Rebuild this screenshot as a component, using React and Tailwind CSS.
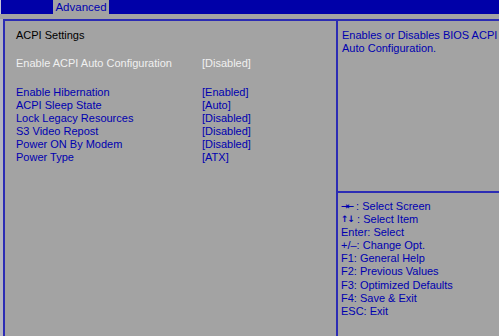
import React from 'react'

const BLUE_BAR = 'bg-[#0000a8]'

const items = [
  ['Enable Hibernation', '[Enabled]'],
  ['ACPI Sleep State', '[Auto]'],
  ['Lock Legacy Resources', '[Disabled]'],
  ['S3 Video Repost', '[Disabled]'],
  ['Power ON By Modem', '[Disabled]'],
  ['Power Type', '[ATX]'],
]

const help = [
  'Enter: Select',
  '+/\u2013: Change Opt.',
  'F1: General Help',
  'F2: Previous Values',
  'F3: Optimized Defaults',
  'F4: Save & Exit',
  'ESC: Exit',
]

const arrowFont = { fontFamily: '"DejaVu Sans", sans-serif' }

export default function App() {
  return (
    <div
      className="w-[499px] h-[336px] overflow-hidden bg-[#a3a3a3] text-[11px] leading-[13px] flex flex-col"
      style={{ fontFamily: '"Liberation Sans", Arial, sans-serif' }}
    >
      {/* top menu bar */}
      <div className={`h-[14px] ${BLUE_BAR} flex shrink-0 border-l border-[#c4c4d8]`}>
        <div className="ml-[52px] w-[56px] bg-[#a3a3a3] text-[#0000b0] text-[11.5px] leading-[14px] text-center">
          Advanced
        </div>
      </div>

      {/* frame */}
      <div className="flex flex-1 mt-[5px] border-l-[3px] border-[#b4b4c0]">
        <div className="flex flex-1 border-t-2 border-l-2 border-[#2c2cb4]">
          {/* left panel */}
          <div className="w-[333px] border-r-2 border-[#2c2cb4] pl-[11px] pt-[8px]">
            <div className="text-black">ACPI Settings</div>
            <div className="flex mt-[15px] text-[#f0f0f0]">
              <span className="w-[186px]">Enable ACPI Auto Configuration</span>
              <span>[Disabled]</span>
            </div>
            <div className="mt-[16px] text-[#0000b0]">
              {items.map(([label, value]) => (
                <div key={label} className="flex">
                  <span className="w-[186px]">{label}</span>
                  <span>{value}</span>
                </div>
              ))}
            </div>
          </div>

          {/* right panel */}
          <div className="flex-1 flex flex-col text-[#0000b0]">
            <div className="h-[172px] shrink-0 border-b-2 border-[#2c2cb4] pl-[4px] pt-[8px]">
              <div>Enables or Disables BIOS ACPI</div>
              <div>Auto Configuration.</div>
            </div>
            <div className="pl-[3px] pt-[7px] leading-[13.1px]">
              <div className="flex items-center">
                <span className="tracking-[-2px] text-[9px] font-bold" style={arrowFont}>{'\u2192\u2190'}</span>
                <span className="ml-[4px]">: Select Screen</span>
              </div>
              <div className="flex items-center">
                <span className="tracking-[-1px] text-[9px] font-bold" style={arrowFont}>{'\u2191\u2193'}</span>
                <span className="ml-[3px]">: Select Item</span>
              </div>
              {help.map((h) => (
                <div key={h}>{h}</div>
              ))}
            </div>
          </div>
        </div>
      </div>
    </div>
  )
}
